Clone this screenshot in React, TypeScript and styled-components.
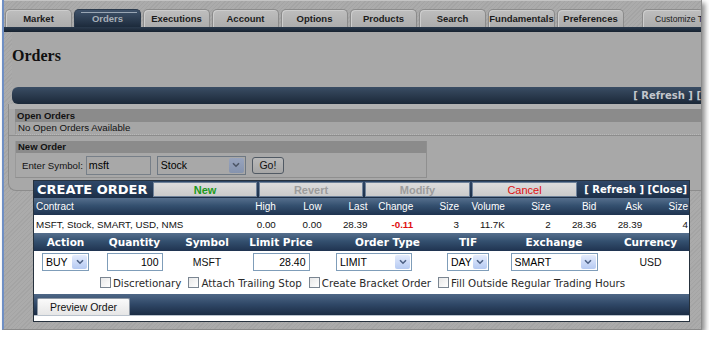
import React from "react";
import styled, { createGlobalStyle, css } from "styled-components";

const Global = createGlobalStyle`
  html, body { margin: 0; padding: 0; background: #ffffff; }
  body { font-family: "Liberation Sans", Arial, sans-serif; }
`;

const ARIAL = `"Liberation Sans", Arial, sans-serif`;
const VERDANA = `"DejaVu Sans", Verdana, sans-serif`;

const hatch = css`
  background: repeating-linear-gradient(135deg, #a4a4a4 0 1px, #ababab 1px 3px);
`;

const Window = styled.div`
  position: relative;
  margin-left: 2px;
  width: 700px;
  height: 330px;
  box-sizing: border-box;
  border-left: 2px solid #6f8fc4;
  border-right: 1px solid #8a8a8a;
  border-bottom: 1px solid #8a8a8a;
  box-shadow: 3px 3px 5px rgba(0, 0, 0, 0.45);
  overflow: hidden;
  ${hatch};
  display: flex;
  flex-direction: column;
`;

const TabBar = styled.div`
  height: 27px;
  box-sizing: border-box;
  padding: 9px 0 0 1px;
  display: flex;
  align-items: flex-end;
  gap: 2px;
  border-top: 1px solid #c4c4c4;
  ${hatch};
`;

const Tab = styled.div<{ $active?: boolean }>`
  position: relative;
  width: 67px;
  flex: none;
  height: 18px;
  box-sizing: border-box;
  border: 1px solid #8b8b8b;
  border-bottom: none;
  border-radius: 5px 5px 0 0;
  background: linear-gradient(#bebebe, #acacac);
  box-shadow: inset 1px 1px 0 #cdcdcd;
  display: flex;
  align-items: center;
  justify-content: center;
  font: bold 9.5px ${ARIAL};
  color: #1c1c1c;
  ${(p) =>
    p.$active &&
    css`
      background: linear-gradient(#3f526a, #1c2a3b);
      border-color: #2b3a4c;
      box-shadow: none;
      color: #a7afb8;
      &::before {
        content: "";
        position: absolute;
        top: 2px;
        left: 6px;
        right: 3px;
        height: 1px;
        background: #9aa6b4;
      }
    `}
`;

const CustomTab = styled(Tab)`
  width: 62px;
  margin-left: 16px;
  justify-content: flex-start;
  padding-left: 12px;
  font-weight: normal;
  font-size: 8.6px;
  white-space: nowrap;
  overflow: hidden;
`;

const NavLine = styled.div`
  height: 5px;
  background: linear-gradient(#2a3a4d, #172230);
`;

const Page = styled.div`
  flex: 1;
  padding-left: 8px;
  display: flex;
  flex-direction: column;
`;

const Title = styled.h1`
  margin: 0;
  height: 55px;
  box-sizing: border-box;
  padding-top: 14px;
  background: #a8a8a8;
  font: bold 16px/20px "Liberation Serif", "Times New Roman", serif;
  color: #101010;
`;

const RefreshBar = styled.div`
  height: 17px;
  border-radius: 6px 0 0 6px;
  background: linear-gradient(#3a4d64, #1b2838);
  display: flex;
  align-items: center;
  justify-content: flex-end;
  font: bold 10px ${VERDANA};
  color: #c3c7cc;
  white-space: nowrap;
`;

const SectionFrame = styled.div`
  margin-left: -4px;
  height: 87px;
  box-sizing: border-box;
  padding: 5px 0 0 6px;
  background: #a8a8a8;
  border-left: 1px solid #8c8c8c;
  border-bottom: 1px solid #8c8c8c;
  border-bottom-left-radius: 8px;
  box-shadow: inset 0 5px 0 #b1b1b1;
`;

const OpenHeader = styled.div`
  height: 13px;
  padding-left: 2px;
  background: #8b8b8b;
  font: bold 9.5px ${ARIAL};
  line-height: 13px;
  color: #111;
`;

const OpenRow = styled.div`
  height: 12px;
  line-height: 12px;
  padding-left: 2px;
  background: #a6a6a6;
  border-bottom: 1px dotted #b8b8b8;
  border-left: 1px solid #999;
  font: 9.7px ${ARIAL};
  color: #111;
`;

const Rule = styled.div`
  height: 1px;
  margin-left: -7px;
  background: #8c8c8c;
  margin-bottom: 5px;
`;

const NewOrderBox = styled.div`
  width: 412px;
  box-sizing: border-box;
  border-right: 1px solid #8f8f8f;
  border-bottom: 1px solid #8f8f8f;
  border-left: 1px solid #999;
`;

const NewHeader = styled(OpenHeader)`
  height: 12px;
  line-height: 12px;
`;

const NewRow = styled.div`
  height: 24px;
  display: flex;
  align-items: center;
  padding-left: 6px;
  font: 9.7px ${ARIAL};
  color: #111;
`;

const SymbolInput = styled.div`
  width: 65px;
  height: 19px;
  box-sizing: border-box;
  margin: 0 6px 0 3px;
  border: 1px solid #777f88;
  padding-left: 2px;
  display: flex;
  align-items: center;
  font: 10.7px ${ARIAL};
  color: #000;
`;

const SelectBox = styled.div<{ $w: number; $dim?: boolean; $h?: number }>`
  width: ${(p) => p.$w}px;
  height: ${(p) => p.$h ?? 18}px;
  box-sizing: border-box;
  border: 1px solid ${(p) => (p.$dim ? "#6e7883" : "#7f9db9")};
  background: ${(p) => (p.$dim ? "#a8a8a8" : "#ffffff")};
  display: flex;
  align-items: center;
  justify-content: space-between;
  padding-left: 3px;
  font: 10.5px ${ARIAL};
  color: #000;
`;

const SelectArrow = styled.span<{ $dim?: boolean }>`
  width: 15px;
  align-self: stretch;
  margin: 1px;
  border-radius: 2px;
  background: ${(p) =>
    p.$dim ? "linear-gradient(#98a4bd, #8593ae)" : "linear-gradient(#e4ecfd, #b6caf2)"};
  display: flex;
  align-items: center;
  justify-content: center;
`;

const GoButton = styled.div`
  width: 32px;
  height: 17px;
  box-sizing: border-box;
  margin-left: 6px;
  border: 1px solid #515a64;
  border-radius: 3px;
  background: linear-gradient(#b9b9b9, #a6a6a6);
  display: flex;
  align-items: center;
  justify-content: center;
  font: 10.5px ${ARIAL};
  color: #111;
`;

/* ---------- modal ---------- */

const Modal = styled.div`
  position: absolute;
  left: 29px;
  top: 180px;
  width: 657px;
  height: 142px;
  box-sizing: border-box;
  border: 1px solid #26313d;
  background: #ffffff;
  display: flex;
  flex-direction: column;
`;

const navy = css`
  background: linear-gradient(#566f8d 0%, #34506f 45%, #1f3350 100%);
`;

const TitleBar = styled.div`
  height: 17px;
  flex: none;
  display: flex;
  align-items: center;
  background: linear-gradient(#2f4868, #1c2f48);
  padding: 0 2px 0 3px;
`;

const ModalTitle = styled.div`
  width: 116px;
  flex: none;
  font: bold 13px/17px ${VERDANA};
  color: #ffffff;
`;

const ActionButtons = styled.div`
  display: flex;
  gap: 2px;
`;

const ActionButton = styled.div<{ $color: string; $w: number; $bold?: boolean }>`
  width: ${(p) => p.$w}px;
  height: 15px;
  box-sizing: border-box;
  border: 1px solid #6f8299;
  background: linear-gradient(#dcdcdc, #cbcbcb);
  display: flex;
  align-items: center;
  justify-content: center;
  font: ${(p) => (p.$bold ? "bold" : "normal")} 11px ${ARIAL};
  color: ${(p) => p.$color};
`;

const TitleLinks = styled.div`
  margin-left: auto;
  font: bold 10px ${VERDANA};
  color: #ffffff;
  white-space: nowrap;
`;

const MarketGrid = styled.div<{ $head?: boolean }>`
  height: ${(p) => (p.$head ? 17 : 18)}px;
  flex: none;
  display: grid;
  grid-template-columns: 1fr repeat(10, 45.8px);
  align-items: center;
  padding: 0 1px 0 2px;
  font: ${(p) => (p.$head ? "10px" : "9.8px")} ${ARIAL};
  color: ${(p) => (p.$head ? "#ffffff" : "#111111")};
  ${(p) => (p.$head ? navy : "background: #ffffff;")}
`;

const Cell = styled.div<{ $left?: boolean; $red?: boolean }>`
  text-align: ${(p) => (p.$left ? "left" : "right")};
  white-space: nowrap;
  ${(p) => p.$red && "color: #e01010; font-weight: bold;"}
`;

const orderCols = "63px 75px 70px 78px 123px 50px 122px 71px";

const OrderHead = styled.div`
  height: 18px;
  flex: none;
  display: grid;
  grid-template-columns: ${orderCols};
  align-items: center;
  ${navy};
  font: bold 10.5px ${VERDANA};
  color: #ffffff;
`;

const HeadCell = styled.div<{ $shift?: number }>`
  text-align: center;
  padding-left: ${(p) => p.$shift ?? 0}px;
  white-space: nowrap;
`;

const OrderRow = styled.div`
  height: 22px;
  flex: none;
  display: grid;
  grid-template-columns: ${orderCols};
  align-items: center;
  justify-items: center;
  font: 10.5px ${ARIAL};
  color: #111;
`;

const NumInput = styled.div<{ $w: number }>`
  width: ${(p) => p.$w}px;
  height: 18px;
  box-sizing: border-box;
  border: 1px solid #7f9db9;
  padding-right: 3px;
  display: flex;
  align-items: center;
  justify-content: flex-end;
  font: 10.5px ${ARIAL};
  color: #000;
`;

const StartSlot = styled.div<{ $ml: number }>`
  justify-self: start;
  margin-left: ${(p) => p.$ml}px;
`;

const OptionsRow = styled.div`
  height: 19px;
  flex: none;
  display: flex;
  align-items: center;
  justify-content: center;
  gap: 7px;
  padding-left: 2px;
  font: 10.3px ${VERDANA};
  color: #2a2a2a;
`;

const Option = styled.label`
  display: flex;
  align-items: center;
  gap: 2px;
  white-space: nowrap;
`;

const Box = styled.span`
  width: 11px;
  height: 11px;
  box-sizing: border-box;
  border: 1px solid #7a8591;
  background: linear-gradient(135deg, #e8e8e8, #ffffff);
`;

const Footer = styled.div`
  margin-top: 2px;
  height: 21px;
  flex: none;
  box-sizing: border-box;
  padding: 4px 0 0 3px;
  display: flex;
  align-items: flex-end;
  background: linear-gradient(#4e6786, #2f4766 50%, #1b2c44);
`;

const PreviewButton = styled.div`
  width: 93px;
  height: 17px;
  box-sizing: border-box;
  border: 1px solid #8f99a5;
  border-bottom: none;
  border-radius: 2px 2px 0 0;
  background: linear-gradient(#fafafa, #e6e6e6);
  display: flex;
  align-items: center;
  justify-content: center;
  font: 10.5px ${ARIAL};
  color: #111;
`;

const BottomStrip = styled.div`
  flex: 1;
  background: #ffffff;
  border-top: 1px solid #b9c2cc;
`;

const Chevron = ({ dim }: { dim?: boolean }) => (
  <svg width="8" height="6" viewBox="0 0 8 6">
    <path
      d="M1 1.2 L4 4.2 L7 1.2"
      stroke={dim ? "#4c5566" : "#4d6185"}
      strokeWidth="1.6"
      fill="none"
    />
  </svg>
);

const FakeSelect = ({
  w,
  value,
  dim,
  h,
}: {
  w: number;
  value: string;
  dim?: boolean;
  h?: number;
}) => (
  <SelectBox $w={w} $dim={dim} $h={h}>
    {value}
    <SelectArrow $dim={dim}>
      <Chevron dim={dim} />
    </SelectArrow>
  </SelectBox>
);

const tabs = [
  "Market",
  "Orders",
  "Executions",
  "Account",
  "Options",
  "Products",
  "Search",
  "Fundamentals",
  "Preferences",
];

const marketHead = ["High", "Low", "Last", "Change", "Size", "Volume", "Size", "Bid", "Ask", "Size"];
const marketVals = ["0.00", "0.00", "28.39", "-0.11", "3", "11.7K", "2", "28.36", "28.39", "4"];

const options = [
  "Discretionary",
  "Attach Trailing Stop",
  "Create Bracket Order",
  "Fill Outside Regular Trading Hours",
];

export default function App() {
  return (
    <>
      <Global />
      <Window>
        <TabBar>
          {tabs.map((t) => (
            <Tab key={t} $active={t === "Orders"}>
              {t}
            </Tab>
          ))}
          <CustomTab>Customize T</CustomTab>
        </TabBar>
        <NavLine />
        <Page>
          <Title>Orders</Title>
          <RefreshBar>[ Refresh ] [</RefreshBar>
          <SectionFrame>
            <OpenHeader>Open Orders</OpenHeader>
            <OpenRow>No Open Orders Available</OpenRow>
            <Rule />
            <NewOrderBox>
              <NewHeader>New Order</NewHeader>
              <NewRow>
                Enter Symbol:
                <SymbolInput>msft</SymbolInput>
                <FakeSelect w={89} h={19} value="Stock" dim />
                <GoButton>Go!</GoButton>
              </NewRow>
            </NewOrderBox>
          </SectionFrame>
        </Page>

        <Modal>
          <TitleBar>
            <ModalTitle>CREATE ORDER</ModalTitle>
            <ActionButtons>
              <ActionButton $w={104} $bold $color="#1c9a1c">New</ActionButton>
              <ActionButton $w={104} $bold $color="#9c9c9c">Revert</ActionButton>
              <ActionButton $w={105} $bold $color="#9c9c9c">Modify</ActionButton>
              <ActionButton $w={105} $color="#e01010">Cancel</ActionButton>
            </ActionButtons>
            <TitleLinks>[ Refresh ] [Close]</TitleLinks>
          </TitleBar>
          <MarketGrid $head>
            <Cell $left>Contract</Cell>
            {marketHead.map((h, i) => (
              <Cell key={i}>{h}</Cell>
            ))}
          </MarketGrid>
          <MarketGrid>
            <Cell $left>MSFT, Stock, SMART, USD, NMS</Cell>
            {marketVals.map((v, i) => (
              <Cell key={i} $red={v.startsWith("-")}>
                {v}
              </Cell>
            ))}
          </MarketGrid>
          <OrderHead>
            <HeadCell>Action</HeadCell>
            <HeadCell>Quantity</HeadCell>
            <HeadCell>Symbol</HeadCell>
            <HeadCell>Limit Price</HeadCell>
            <HeadCell $shift={12}>Order Type</HeadCell>
            <HeadCell>TIF</HeadCell>
            <HeadCell>Exchange</HeadCell>
            <HeadCell>Currency</HeadCell>
          </OrderHead>
          <OrderRow>
            <FakeSelect w={47} value="BUY" />
            <NumInput $w={56}>100</NumInput>
            <span>MSFT</span>
            <NumInput $w={57}>28.40</NumInput>
            <StartSlot $ml={16}>
              <FakeSelect w={76} value="LIMIT" />
            </StartSlot>
            <FakeSelect w={42} value="DAY" />
            <FakeSelect w={87} value="SMART" />
            <span>USD</span>
          </OrderRow>
          <OptionsRow>
            {options.map((o) => (
              <Option key={o}>
                <Box />
                {o}
              </Option>
            ))}
          </OptionsRow>
          <Footer>
            <PreviewButton>Preview Order</PreviewButton>
          </Footer>
          <BottomStrip />
        </Modal>
      </Window>
    </>
  );
}
